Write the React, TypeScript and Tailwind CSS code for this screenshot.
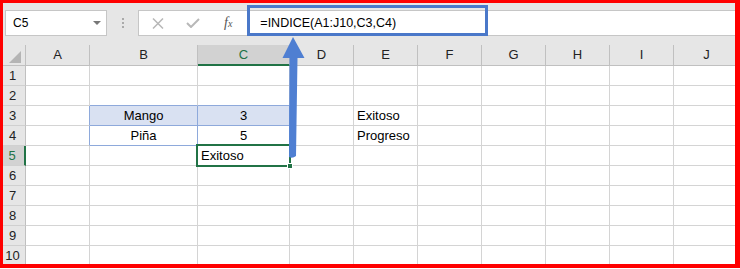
import React from "react";

const cols = ["A", "B", "C", "D", "E", "F", "G", "H", "I", "J"];
const colW = ["w-[64px]", "w-[108px]", "w-[92px]", "w-[64px]", "w-[64px]", "w-[64px]", "w-[64px]", "w-[64px]", "w-[64px]", "w-[66px]"];

type CellData = { text?: string; align?: "center" | "left"; fill?: boolean; blueR?: boolean; blueB?: boolean };

const cells: Record<string, CellData> = {
    "A3": { blueR: true },
    "A4": { blueR: true },
    "B2": { blueB: true },
    "C2": { blueB: true },
    "B3": { text: "Mango", align: "center", fill: true, blueR: true, blueB: true },
    "C3": { text: "3", align: "center", fill: true, blueR: true, blueB: true },
    "B4": { text: "Piña", align: "center", blueR: true, blueB: true },
    "C4": { text: "5", align: "center", blueR: true, blueB: true },
    "C5": { text: "Exitoso", align: "left" },
    "E3": { text: "Exitoso", align: "left" },
    "E4": { text: "Progreso", align: "left" },
};

const Cell: React.FC<{ w: string; data?: CellData }> = ({ w, data }) => {
    const bg = data?.fill ? "bg-[#d9e1f2]" : "bg-white";
    const br = data?.blueR ? "border-r-[#8ea9db]" : "border-r-[#d4d4d4]";
    const bb = data?.blueB ? "border-b-[#8ea9db]" : "border-b-[#d4d4d4]";
    const align = data?.align === "center" ? "justify-center" : "justify-start pl-[3px]";
    return (
        <div className={`${w} h-[20px] shrink-0 flex items-center border-r border-b ${br} ${bb} ${bg} ${align} text-[13px] text-black leading-none`}>
            {data?.text}
        </div>
    );
};

const App: React.FC = () => {
    return (
        <div className="relative w-[740px] h-[269px] overflow-hidden bg-white font-['Liberation_Sans',Arial,sans-serif]">
            {/* formula bar */}
            <div className="h-[45px] bg-[#e6e6e6] flex items-start pt-[10px] pl-[5px]">
                <div className="w-[102px] h-[26px] bg-white border border-[#c6c6c6] flex items-center justify-between pl-[7px] pr-[5px]">
                    <span className="text-[12px] text-black">C5</span>
                    <svg width="8" height="4" viewBox="0 0 8 4"><path d="M0 0 L8 0 L4 4 Z" fill="#777"/></svg>
                </div>
                <div className="w-[31px] h-[26px] flex flex-col items-center justify-center gap-[2px]">
                    <span className="w-[2px] h-[2px] bg-[#aaa]"/>
                    <span className="w-[2px] h-[2px] bg-[#aaa]"/>
                    <span className="w-[2px] h-[2px] bg-[#aaa]"/>
                </div>
                <div className="flex-1 h-[26px] bg-white border border-[#c6c6c6] flex items-center">
                    <svg className="ml-[13px]" width="12" height="11" viewBox="0 0 12 11">
                        <path d="M1 0.5 L11 10.5 M11 0.5 L1 10.5" stroke="#b8b8b8" strokeWidth="1.5"/>
                    </svg>
                    <svg className="ml-[22px]" width="14" height="10" viewBox="0 0 14 10">
                        <path d="M1 5 L5 9 L13 1" stroke="#b8b8b8" strokeWidth="2" fill="none"/>
                    </svg>
                    <span className="ml-[24px] font-['Liberation_Serif',serif] italic text-[14px] text-[#555] leading-none">
                        f<span className="text-[10px]">x</span>
                    </span>
                    <span className="ml-[28px] text-[12.5px] text-black">=INDICE(A1:J10,C3,C4)</span>
                </div>
            </div>

            {/* column headers */}
            <div className="flex h-[21px]">
                <div className="w-[26px] shrink-0 bg-[#e6e6e6] border-r border-b border-[#c0c0c0] flex items-end justify-end pr-[4px] pb-[2px]">
                    <svg width="12" height="12" viewBox="0 0 12 12"><path d="M12 0 L12 12 L0 12 Z" fill="#b4b4b4"/></svg>
                </div>
                {cols.map((c, i) => (
                    <div key={c}
                         className={`${colW[i]} shrink-0 flex items-center justify-center text-[13px] border-r ${c === "C" ? "bg-[#d2d2d2] text-[#217346] border-b-2 border-b-[#217346] border-r-[#c0c0c0]" : "bg-[#e6e6e6] text-[#222] border-b border-[#c0c0c0]"}`}>
                        {c}
                    </div>
                ))}
            </div>

            {/* rows */}
            {Array.from({ length: 10 }, (_, r) => r + 1).map(r => (
                <div key={r} className="flex">
                    <div className={`w-[26px] h-[20px] shrink-0 flex items-center justify-center text-[13px] border-b border-b-[#d0d0d0] ${r === 5 ? "bg-[#d2d2d2] text-[#217346] border-r-2 border-r-[#217346]" : "bg-[#e6e6e6] text-[#222] border-r border-r-[#c0c0c0]"}`}>
                        {r}
                    </div>
                    {cols.map((c, i) => (
                        <Cell key={c} w={colW[i]} data={cells[`${c}${r}`]}/>
                    ))}
                </div>
            ))}

            {/* active cell C5 */}
            <div className="absolute left-[196px] top-[144px] w-[95px] h-[23px] border-2 border-[#217346]"/>
            <div className="absolute left-[287px] top-[163px] w-[6px] h-[6px] bg-[#217346] border border-white"/>

            {/* annotations */}
            <div className="absolute left-[247px] top-[5px] w-[241px] h-[31px] border-[3px] border-[#4a78c9]"/>
            <svg className="absolute left-0 top-0" width="740" height="269" viewBox="0 0 740 269">
                <path d="M282.5 58 L293 37 L304.5 58 L297.5 58 L296 156 Q292.5 159 289 157 L289.5 58 Z" fill="#4f7fd2"/>
            </svg>
            <div className="absolute left-0 top-0 w-[740px] h-[268px] border-l-[3px] border-t-[3px] border-r-[5px] border-b-[4px] border-[#ff0000]"/>
        </div>
    );
};

export default App;
